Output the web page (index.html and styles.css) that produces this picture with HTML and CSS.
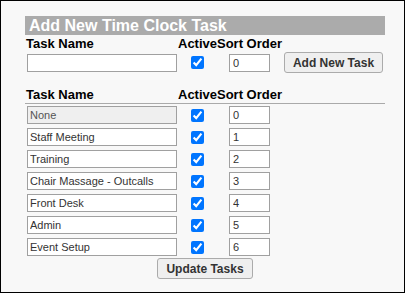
FILE: index.html
```html
<!DOCTYPE html>
<html lang="en">
<head>
  <meta charset="UTF-8">
  <title>time clock tasks</title>
  <link rel="stylesheet" href="styles.css">
</head>
<body>
  <div class="panel">
    <div class="title">Add New Time Clock Task</div>
    <table class="tasks new-task">
      <colgroup>
        <col class="c-name"><col class="c-active"><col class="c-order"><col class="c-action">
      </colgroup>
      <tr>
        <th class="first">Task Name</th><th>Active</th><th>Sort Order</th><th></th>
      </tr>
      <tr>
        <td><input type="text" class="name"></td>
        <td><input type="checkbox" class="check" checked></td>
        <td><input type="text" class="order" value="0"></td>
        <td><button class="btn add">Add New Task</button></td>
      </tr>
    </table>
    <table class="tasks list">
      <colgroup>
        <col class="c-name"><col class="c-active"><col class="c-order"><col class="c-action">
      </colgroup>
      <thead>
        <tr>
          <th class="first">Task Name</th><th>Active</th><th>Sort Order</th><th></th>
        </tr>
      </thead>
      <tbody>
        <tr>
          <td><input type="text" class="name locked" value="None" readonly></td>
          <td><input type="checkbox" class="check" checked></td>
          <td><input type="text" class="order" value="0"></td>
          <td></td>
        </tr>
        <tr>
          <td><input type="text" class="name" value="Staff Meeting"></td>
          <td><input type="checkbox" class="check" checked></td>
          <td><input type="text" class="order" value="1"></td>
          <td></td>
        </tr>
        <tr>
          <td><input type="text" class="name" value="Training"></td>
          <td><input type="checkbox" class="check" checked></td>
          <td><input type="text" class="order" value="2"></td>
          <td></td>
        </tr>
        <tr>
          <td><input type="text" class="name" value="Chair Massage - Outcalls"></td>
          <td><input type="checkbox" class="check" checked></td>
          <td><input type="text" class="order" value="3"></td>
          <td></td>
        </tr>
        <tr>
          <td><input type="text" class="name" value="Front Desk"></td>
          <td><input type="checkbox" class="check" checked></td>
          <td><input type="text" class="order" value="4"></td>
          <td></td>
        </tr>
        <tr>
          <td><input type="text" class="name" value="Admin"></td>
          <td><input type="checkbox" class="check" checked></td>
          <td><input type="text" class="order" value="5"></td>
          <td></td>
        </tr>
        <tr>
          <td><input type="text" class="name" value="Event Setup"></td>
          <td><input type="checkbox" class="check" checked></td>
          <td><input type="text" class="order" value="6"></td>
          <td></td>
        </tr>
      </tbody>
    </table>
    <div class="actions">
      <button class="btn update">Update Tasks</button>
    </div>
  </div>
</body>
</html>
```

FILE: styles.css
```css
body {
  margin: 0;
  font-family: 'Liberation Sans', Arial, sans-serif;
}
.panel {
  box-sizing: border-box;
  width: 405px;
  height: 293px;
  border: 1px solid #000;
  background: #f8f8f8;
  padding: 15px 20px 0 24px;
}
.title {
  box-sizing: border-box;
  width: 360px;
  height: 19px;
  line-height: 19px;
  padding-left: 4px;
  background: #ababab;
  color: #fff;
  font-size: 16px;
  font-weight: bold;
}
.tasks {
  width: 360px;
  table-layout: fixed;
  border-collapse: separate;
  border-spacing: 0;
}
.c-name { width: 153px; }
.c-active { width: 39px; }
.c-order { width: 65px; }
.c-action { width: 103px; }
.tasks th {
  padding: 1px 0 0;
  font-size: 13px;
  line-height: 15px;
  font-weight: bold;
  text-align: left;
  color: #000;
  white-space: nowrap;
}
.tasks th.first { padding-left: 1px; }
.tasks td {
  padding: 1px 0;
  vertical-align: middle;
}
.list { margin-top: 12px; }
.list th {
  padding-bottom: 1px;
  border-bottom: 1px solid #aaa;
}
.list td { padding: 2px 0; }
.name, .order {
  display: block;
  box-sizing: border-box;
  height: 18px;
  margin: 0;
  border: 1px solid #a0a0a0;
  border-radius: 0;
  background: #fff;
  color: #333;
  font-family: 'Liberation Sans', Arial, sans-serif;
  font-size: 11px;
  outline: none;
}
.name {
  width: 150px;
  margin-left: 2px;
  padding: 0 2px;
}
.name.locked {
  background: #efefef;
  color: #555;
}
.order {
  width: 41px;
  margin: 0 auto;
  padding: 0 3px;
}
.check {
  display: block;
  width: 13px;
  height: 13px;
  margin: 0 auto;
}
.btn {
  box-sizing: border-box;
  height: 21px;
  padding: 0 8px;
  border: 1px solid #ababab;
  border-radius: 3px;
  background: #efefef;
  color: #333;
  font-family: 'Liberation Sans', Arial, sans-serif;
  font-size: 12px;
  font-weight: bold;
}
.add {
  width: 99px;
  margin-left: 2px;
  padding: 0;
}
.actions {
  width: 360px;
  text-align: center;
}
.update { width: 96px; padding: 0; }
```
